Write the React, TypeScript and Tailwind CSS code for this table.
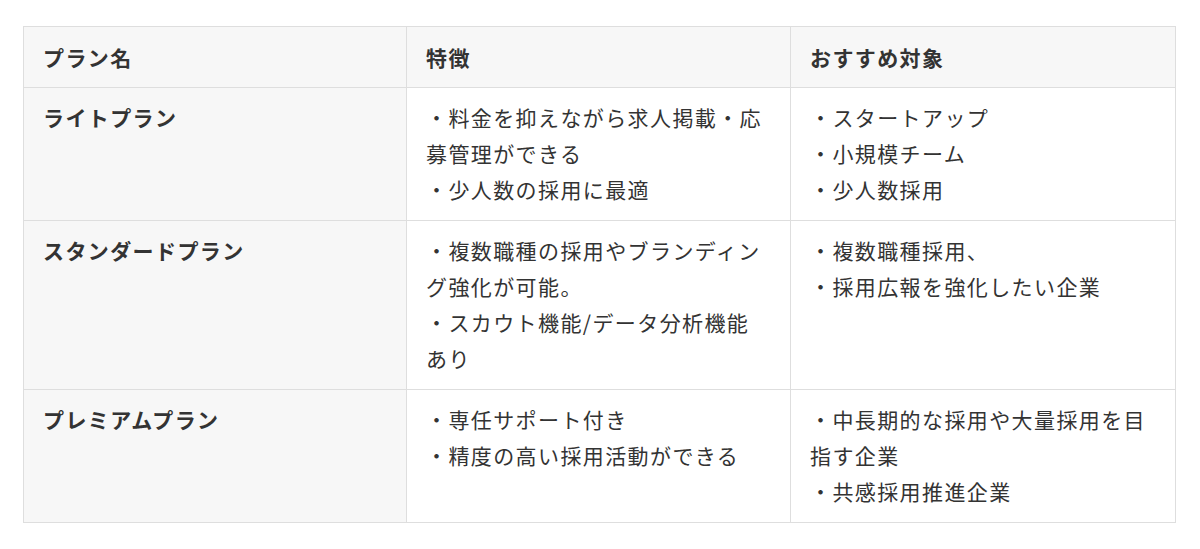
import React from "react";

const rows: { name: string; features: string[]; targets: string[] }[] = [
  {
    name: "ライトプラン",
    features: ["・料金を抑えながら求人掲載・応募管理ができる", "・少人数の採用に最適"],
    targets: ["・スタートアップ", "・小規模チーム", "・少人数採用"],
  },
  {
    name: "スタンダードプラン",
    features: ["・複数職種の採用やブランディング強化が可能。", "・スカウト機能/データ分析機能あり"],
    targets: ["・複数職種採用、", "・採用広報を強化したい企業"],
  },
  {
    name: "プレミアムプラン",
    features: ["・専任サポート付き", "・精度の高い採用活動ができる"],
    targets: ["・中長期的な採用や大量採用を目指す企業", "・共感採用推進企業"],
  },
];

export default function App() {
  return (
    <div
      className="w-[1200px] h-[549px] bg-white pt-[26px] pl-[23px] text-[#333] text-[21px] leading-[36px] tracking-[1.4px]"
      style={{ fontFamily: '"Noto Sans CJK JP", "Noto Sans", sans-serif' }}
    >
      <table className="w-[1152px] table-fixed border-collapse">
        <colgroup>
          <col className="w-[383px]" />
          <col className="w-[384px]" />
          <col className="w-[385px]" />
        </colgroup>
        <thead>
          <tr className="bg-[#f7f7f7]">
            <th className="border border-[#dedede] pl-[19px] pr-[22px] py-[12px] text-left align-top font-bold">プラン名</th>
            <th className="border border-[#dedede] pl-[19px] pr-[22px] py-[12px] text-left align-top font-bold">特徴</th>
            <th className="border border-[#dedede] pl-[19px] pr-[22px] py-[12px] text-left align-top font-bold">おすすめ対象</th>
          </tr>
        </thead>
        <tbody>
          {rows.map((r) => (
            <tr key={r.name}>
              <td className="border border-[#dedede] bg-[#f7f7f7] pl-[19px] pr-[22px] pt-[11px] pb-[13px] align-top font-bold">{r.name}</td>
              <td className="border border-[#dedede] bg-white pl-[19px] pr-[22px] pt-[11px] pb-[13px] align-top">
                {r.features.map((f) => (
                  <div key={f}>{f}</div>
                ))}
              </td>
              <td className="border border-[#dedede] bg-white pl-[19px] pr-[22px] pt-[11px] pb-[13px] align-top">
                {r.targets.map((t) => (
                  <div key={t}>{t}</div>
                ))}
              </td>
            </tr>
          ))}
        </tbody>
      </table>
    </div>
  );
}
